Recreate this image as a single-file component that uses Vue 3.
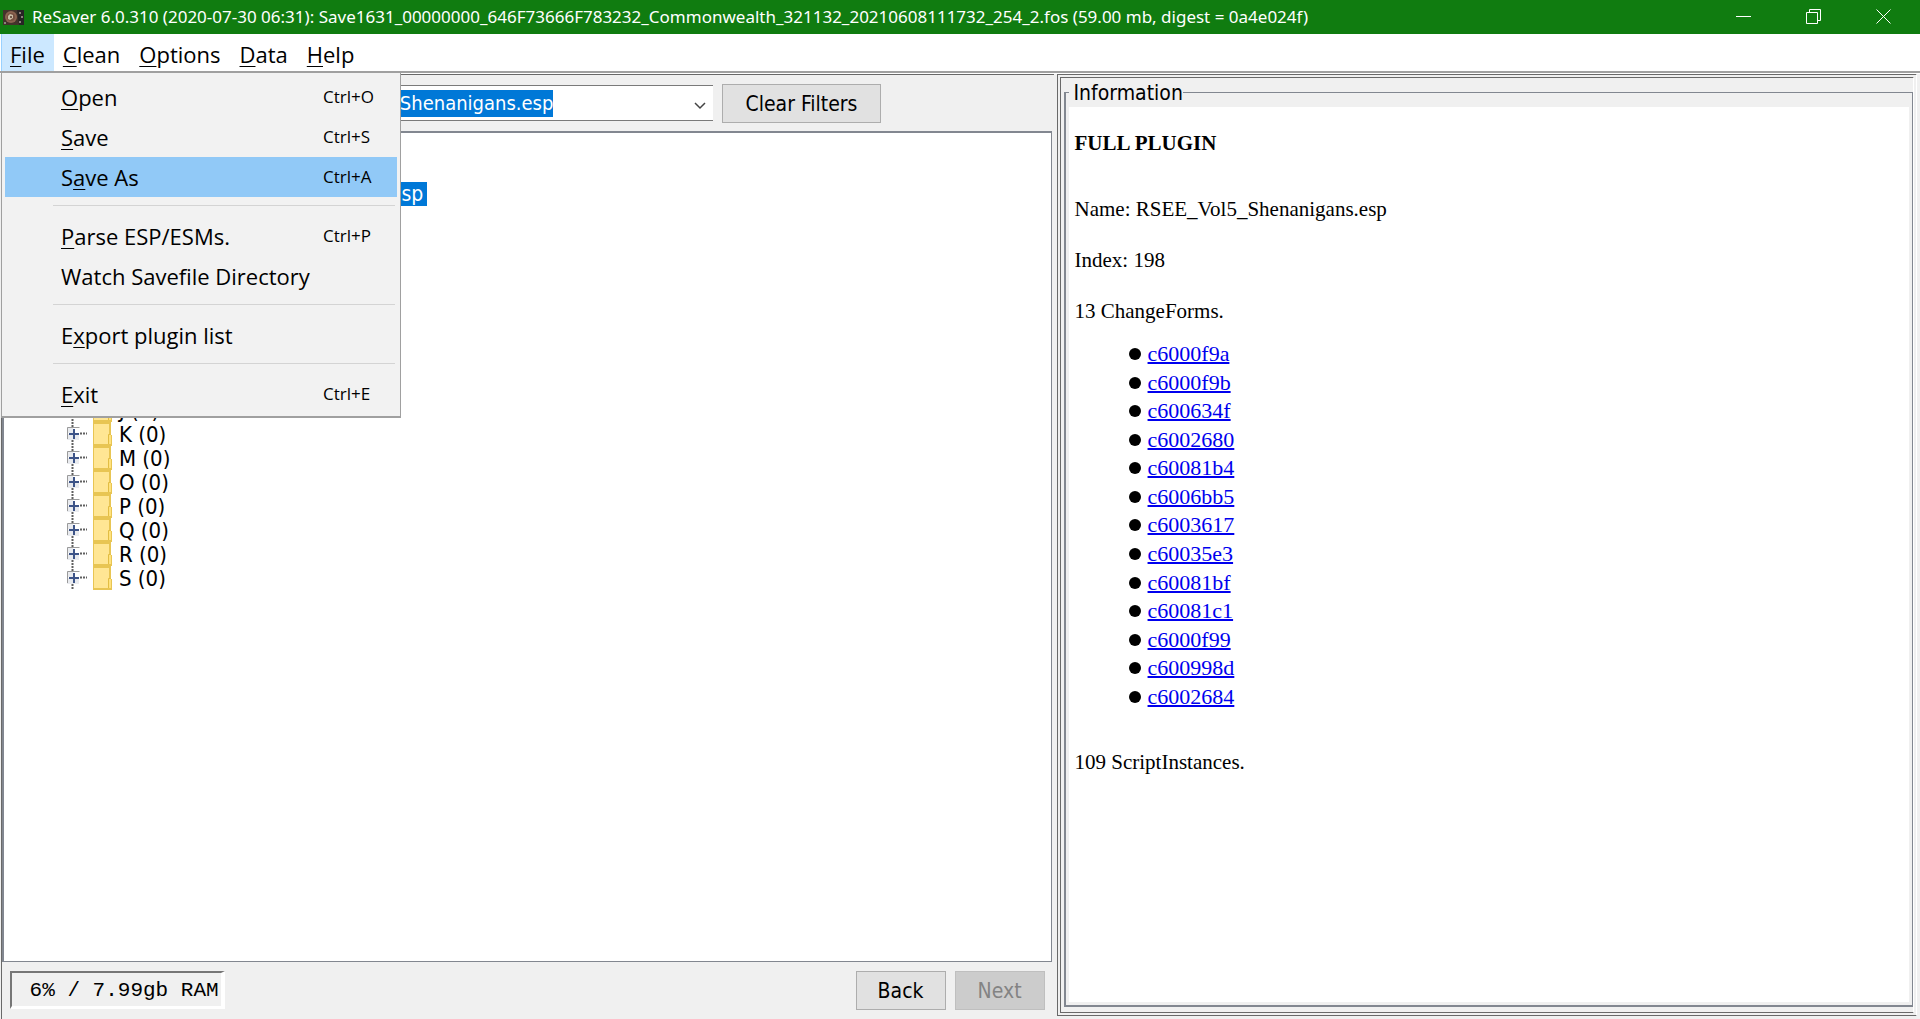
<script setup>
import { ref, onMounted } from 'vue';

const title = 'ReSaver 6.0.310 (2020-07-30 06:31): Save1631_00000000_646F73666F783232_Commonwealth_321132_20210608111732_254_2.fos (59.00 mb, digest = 0a4e024f)';

// key: the mnemonic letter that gets underlined
const menus = [
    { key: 'F', post: 'ile', open: true },
    { key: 'C', post: 'lean' },
    { key: 'O', post: 'ptions' },
    { key: 'D', post: 'ata' },
    { key: 'H', post: 'elp' },
];

const fileMenu = [
    { pre: '', key: 'O', post: 'pen', shortcut: 'Ctrl+O' },
    { pre: '', key: 'S', post: 'ave', shortcut: 'Ctrl+S' },
    { pre: 'S', key: 'a', post: 've As', shortcut: 'Ctrl+A', active: true },
    { separator: true },
    { pre: '', key: 'P', post: 'arse ESP/ESMs.', shortcut: 'Ctrl+P' },
    { pre: 'Watch Savefile Directory', key: '', post: '' },
    { separator: true },
    { pre: 'E', key: 'x', post: 'port plugin list' },
    { separator: true },
    { pre: '', key: 'E', post: 'xit', shortcut: 'Ctrl+E' },
];

const plugin = 'RSEE_Vol5_Shenanigans.esp';
const filter = ref(plugin);
const filterInput = ref(null);
const letters = ['J', 'K', 'M', 'O', 'P', 'Q', 'R', 'S'];

const changeForms = [
    'c6000f9a', 'c6000f9b', 'c600634f', 'c6002680', 'c60081b4', 'c6006bb5', 'c6003617',
    'c60035e3', 'c60081bf', 'c60081c1', 'c6000f99', 'c600998d', 'c6002684',
];

onMounted(() => {
    filterInput.value.focus();
    filterInput.value.select();
});
</script>

<template>
    <div class="window">
        <header class="titlebar">
            <svg class="app-icon" width="21" height="15" viewBox="0 0 21 15">
                <rect width="21" height="15" fill="#43332b" />
                <path d="M14 0h7v15h-5z" fill="#272425" />
                <path d="M16 2h2v2h-2zM18 6h2v2h-2zM16 11h2v2h-2zM1 12h2v2H1z" fill="#8c827d" />
                <circle cx="8" cy="7" r="6" fill="#8b6350" />
                <circle cx="8" cy="7" r="4" fill="#765040" />
                <path d="M5 6l2-2 3 1v3l-3 2-2-1z" fill="#c9bba5" />
                <circle cx="8" cy="7" r="1" fill="#51372d" />
            </svg>
            <span class="title">{{ title }}</span>
            <button class="win-btn" aria-label="Minimize">
                <svg width="16" height="16" viewBox="0 0 16 16"><path d="M0 7.5h15" /></svg>
            </button>
            <button class="win-btn" aria-label="Restore">
                <svg width="16" height="16" viewBox="0 0 16 16"><path d="M.5 3.5h11v11H.5zM3.5 3.5v-3h11v11h-3" /></svg>
            </button>
            <button class="win-btn" aria-label="Close">
                <svg width="16" height="16" viewBox="0 0 16 16"><path d="M.5.5l14 14M14.5.5l-14 14" /></svg>
            </button>
        </header>

        <nav class="menubar">
            <div v-for="menu in menus" :key="menu.key" class="menu">
                <button class="menu-btn" :class="{ open: menu.open }"><u>{{ menu.key }}</u>{{ menu.post }}</button>
                <div v-if="menu.open" class="popup">
                    <template v-for="(item, i) in fileMenu" :key="i">
                        <div v-if="item.separator" class="separator"></div>
                        <button v-else class="item" :class="{ active: item.active }">
                            <span>{{ item.pre }}<u>{{ item.key }}</u>{{ item.post }}</span>
                            <span class="shortcut">{{ item.shortcut }}</span>
                        </button>
                    </template>
                </div>
            </div>
        </nav>

        <main class="split">
            <section class="left">
                <div class="toolbar">
                    <div class="combo">
                        <input ref="filterInput" v-model="filter" type="text" spellcheck="false" aria-label="Plugin filter" />
                        <button class="arrow" aria-label="Show plugins">
                            <svg width="12" height="8" viewBox="0 0 12 8"><path d="M1 1l5 5 5-5" /></svg>
                        </button>
                    </div>
                    <button class="btn clear">Clear Filters</button>
                </div>

                <ul class="tree">
                    <li class="leaf"><span class="selected">{{ plugin }}</span></li>
                    <li v-for="letter in letters" :key="letter" class="node">
                        <svg class="handle" width="20" height="24" viewBox="0 0 20 24">
                            <path class="dots" d="M5.500 0v24M13 11.500h7" />
                            <rect x="0" y="5" width="12" height="13" fill="#e9ebef" />
                            <path d="M.5 17V5.500h12" fill="none" stroke="#9a9a9a" />
                            <path d="M1 11h5V6h6v6H1z" fill="#fff" />
                            <path d="M2 12h10M7 7v10" fill="none" stroke="#3d5488" stroke-width="2" />
                        </svg>
                        <svg class="folder" width="19" height="24" viewBox="0 0 19 24">
                            <path d="M0 0h18v13h1v11H0z" fill="#e8c553" />
                            <path d="M1 2h15v20H1z" fill="#ffe694" />
                            <path d="M16 13h2v9h-2z" fill="#ffe27e" />
                            <path d="M15.500 22v-9.500h2" fill="none" stroke="#e2bd43" />
                        </svg>
                        <span>{{ letter }} (0)</span>
                    </li>
                </ul>

                <footer class="status">
                    <output class="memory">&nbsp;6% / 7.99gb RAM</output>
                    <button class="btn nav">Back</button>
                    <button class="btn nav" disabled>Next</button>
                </footer>
            </section>

            <section class="right">
                <fieldset class="info">
                    <legend>Information</legend>
                    <article class="page">
                        <h1>FULL PLUGIN</h1>
                        <p>Name: {{ plugin }}</p>
                        <p>Index: 198</p>
                        <p>13 ChangeForms.</p>
                        <ul>
                            <li v-for="form in changeForms" :key="form"><a href="#">{{ form }}</a></li>
                        </ul>
                        <p>109 ScriptInstances.</p>
                    </article>
                </fieldset>
            </section>
        </main>
    </div>
</template>

<style>
body {
    margin: 0;
    overflow: hidden;
    background: #fff;
}
</style>

<style scoped>
* {
    box-sizing: border-box;
}

button,
input {
    margin: 0;
    padding: 0;
    border: 0;
    outline: 0;
    background: none;
    font: inherit;
    color: inherit;
}

.window {
    display: flex;
    flex-direction: column;
    height: 100vh;
    background: #f0f0f0;
    color: #000;
    font: 21px/24px "DejaVu Sans Condensed", "Noto Sans", sans-serif;
}

.titlebar {
    display: flex;
    align-items: center;
    height: 34px;
    padding: 0 1px 0 3px;
    background: #107c10;
    color: #fff;
}

.title {
    flex: 1;
    padding-left: 8px;
    font: 17px/36px "Noto Sans", sans-serif;
    white-space: nowrap;
}

.win-btn {
    display: flex;
    align-items: center;
    justify-content: center;
    width: 70px;
    height: 34px;
}

.win-btn path {
    fill: none;
    stroke: #fff;
}

.menubar {
    display: flex;
    height: 39px;
    padding-left: 1px;
    background: #fff;
    border-bottom: 2px solid #a0a0a0;
    font-family: "Open Sans", sans-serif;
    font-size: 22px;
}

.menu {
    position: relative;
}

.menu-btn {
    height: 37px;
    padding: 2px 10px 0 9px;
}

.menu-btn.open {
    padding: 2px 9px 0 8px;
    background: #cce8ff;
    border-left: 1px solid #99d1ff;
}

u {
    text-underline-offset: 3px;
    text-decoration-thickness: 1px;
    text-decoration-skip-ink: none;
}

.popup {
    position: absolute;
    z-index: 1;
    top: 37px;
    left: 0;
    width: 400px;
    padding: 4px 3px 2px;
    background: #f2f2f2;
    border: 1px solid #a0a0a0;
    border-width: 2px 1px 2px 1px;
}

.item {
    display: grid;
    grid-template-columns: 1fr 74px;
    width: 100%;
    height: 40px;
    padding: 2px 0 0 56px;
    line-height: 36px;
    text-align: left;
    white-space: nowrap;
}

.item.active {
    background: #91c9f7;
}

.shortcut {
    font-size: 17px;
}

.separator {
    height: 19px;
    margin: 0 2px 0 48px;
    padding-top: 8px;
}

.separator::before {
    content: "";
    display: block;
    border-top: 1px solid #d4d4d4;
}

.split {
    flex: 1;
    display: grid;
    grid-template-columns: 1052fr 866fr;
    min-height: 0;
    padding-left: 1px;
    border-top: 1px solid #fff;
}

.left {
    display: flex;
    flex-direction: column;
    min-width: 0;
    border: 1px solid #696969;
    border-width: 1px 0 0 1px;
}

.toolbar {
    display: flex;
    align-items: center;
    height: 56px;
    padding-left: 76px;
    gap: 9px;
}

.combo {
    display: flex;
    align-items: center;
    width: 635px;
    height: 36px;
    background: #fff;
    border: 1px solid #7a7a7a;
    border-right: 0;
}

.combo input {
    flex: 1;
    min-width: 0;
    height: 27px;
    padding-left: 218px;
    font-size: 20px;
    line-height: 27px;
}

.combo input::selection {
    background: #0078d7;
    color: #fff;
}

.arrow {
    width: 26px;
}

.arrow path {
    fill: none;
    stroke: #444;
    stroke-width: 1.5;
}

.btn {
    height: 39px;
    padding-top: 2px;
    background: #e1e1e1;
    border: 1px solid #adadad;
}

.clear {
    width: 159px;
}

.nav {
    width: 90px;
}

.btn:disabled {
    background: #ccc;
    border-color: #bfbfbf;
    color: #838383;
}

.tree {
    flex: 1;
    min-height: 0;
    margin: 0 2px 0 0;
    padding: 49px 0 0;
    list-style: none;
    background: #fff;
    border: solid #828790;
    border-width: 2px 1px 1px 2px;
}

.tree li {
    display: flex;
    height: 24px;
    padding-left: 63px;
    white-space: nowrap;
}

.tree .node {
    font-size: 22px;
    line-height: 26px;
}

.tree .leaf {
    margin-bottom: 192px;
    padding-left: 148px;
}

.selected {
    padding: 0 4px 0 2px;
    background: #0078d7;
    color: #fff;
}

.handle {
    margin-right: 6px;
}

.folder {
    margin-right: 7px;
}

.dots {
    fill: none;
    stroke: #606060;
    stroke-width: 2;
    stroke-dasharray: 2 1;
}

.status {
    display: flex;
    align-items: center;
    gap: 9px;
    height: 57px;
    padding: 0 9px 1px 8px;
}

.memory {
    margin-right: auto;
    border: 2px solid #767676;
    border-right: 4px solid #fff;
    border-bottom: 3px solid #fff;
    padding: 5px 2px 2px 5px;
    font: 21px/26px "Liberation Mono", monospace;
}

.right {
    display: flex;
    min-width: 0;
    margin: 0 3px 3px 3px;
    padding: 3px 0 5px 3px;
    border: 4px double #696969;
    border-right-color: #fff;
}

.info {
    flex: 1;
    min-width: 0;
    display: flex;
    margin: 0;
    padding: 4px 3px 3px 3px;
    border: solid #828790;
    border-width: 1px 1px 2px 2px;
}

.info legend {
    padding: 2px 0 0 5px;
    line-height: 20px;
}

.page {
    flex: 1;
    padding: 24px 6px;
    background: #fff;
    font: 21px/24px "Liberation Serif", serif;
}

.page h1 {
    margin: 0 0 42px;
    font-size: 21px;
    line-height: 24px;
}

.page p {
    margin: 0 0 27px;
}

.page ul {
    display: flex;
    flex-direction: column;
    height: 371px;
    margin: -10px 0 39px;
    padding: 0 0 0 54px;
    list-style: none;
}

.page li {
    flex: 1;
    display: flex;
    align-items: center;
    gap: 7px;
    font-size: 22px;
}

.page li::before {
    content: "";
    width: 12px;
    height: 12px;
    border-radius: 50%;
    background: #000;
}

a {
    color: #00e;
    text-decoration: underline;
    text-decoration-thickness: 2px;
    text-decoration-skip-ink: none;
}
</style>
